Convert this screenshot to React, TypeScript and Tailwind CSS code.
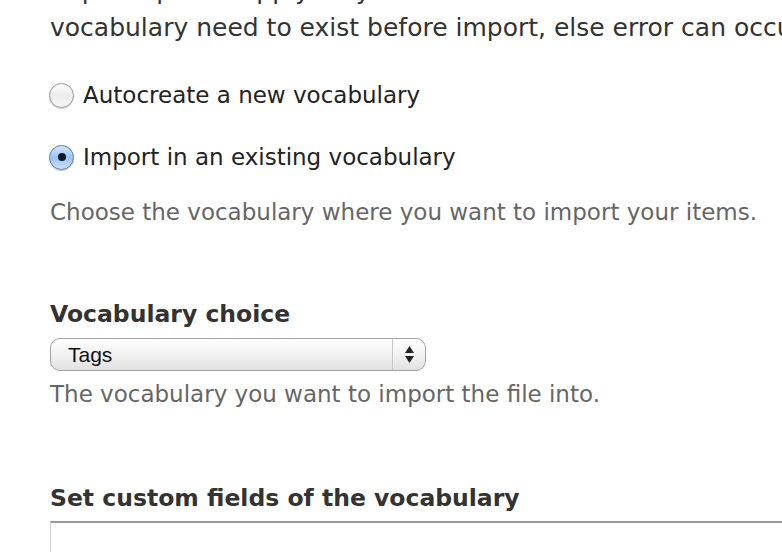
import React from 'react';

function Radio({ checked }: { checked?: boolean }) {
  return (
    <span
      className={
        checked
          ? 'w-[25px] h-[25px] rounded-full border border-[#5b7fae] bg-gradient-to-b from-[#d6e7fb] via-[#9cc3f0] to-[#c9e1fb] shadow-[0_1px_1px_rgba(0,0,0,0.25)] flex items-center justify-center shrink-0'
          : 'w-[25px] h-[25px] rounded-full border border-[#9a9a9a] bg-gradient-to-b from-[#fdfdfd] via-[#ececec] to-[#f8f8f8] shadow-[0_1px_1px_rgba(0,0,0,0.2)] flex items-center justify-center shrink-0'
      }
    >
      {checked && <span className="w-[8px] h-[8px] rounded-full bg-[#0d1a2b]" />}
    </span>
  );
}

export default function App() {
  return (
    <div className="w-[782px] h-[552px] overflow-hidden bg-white font-['DejaVu_Sans',sans-serif] text-[23px] text-[#333]">
      <div className="pl-[50px]">
        <p className="mt-[-28px] leading-[37px] whitespace-nowrap text-[25px]">
          <span className="block">Import options apply only when the selected</span>
          <span className="block">vocabulary need to exist before import, else error can occur.</span>
        </p>

        <label className="mt-[35px] -ml-[1px] flex items-center gap-[9px] h-[28px] leading-[28px] text-[#222]">
          <Radio />
          <span>Autocreate a new vocabulary</span>
        </label>

        <label className="mt-[34px] -ml-[1px] flex items-center gap-[9px] h-[28px] leading-[28px] text-[#222]">
          <Radio checked />
          <span>Import in an existing vocabulary</span>
        </label>

        <p className="mt-[27px] leading-[28px] text-[#666] whitespace-nowrap">
          Choose the vocabulary where you want to import your items.
        </p>

        <h3 className="mt-[74px] leading-[28px] font-bold text-[23.5px]">Vocabulary choice</h3>

        <div className="mt-[10px] w-[376px] h-[33px] rounded-[10px] border border-[#a3a3a3] bg-gradient-to-b from-[#ffffff] via-[#f2f2f2] to-[#e2e2e2] shadow-[inset_0_1px_0_#fff] flex items-center">
          <span className="flex-1 pl-[17px] font-['Liberation_Sans',sans-serif] text-[21px] text-[#111] leading-none">
            Tags
          </span>
          <span className="w-[33px] h-full border-l border-[#c8c8c8] flex flex-col items-center justify-center gap-[3px]">
            <svg width="9" height="7" viewBox="0 0 9 7">
              <path d="M4.5 0 L9 7 L0 7 Z" fill="#222" />
            </svg>
            <svg width="9" height="7" viewBox="0 0 9 7">
              <path d="M0 0 L9 0 L4.5 7 Z" fill="#222" />
            </svg>
          </span>
        </div>

        <p className="mt-[9px] leading-[28px] text-[#666] whitespace-nowrap">
          The vocabulary you want to import the file into.
        </p>

        <h3 className="mt-[76px] leading-[28px] font-bold text-[23.5px]">Set custom fields of the vocabulary</h3>

        <div className="mt-[9px] w-[800px] h-[60px] border-t-2 border-t-[#9a9a9a] border-l border-l-[#cfcfcf]" />
      </div>
    </div>
  );
}
